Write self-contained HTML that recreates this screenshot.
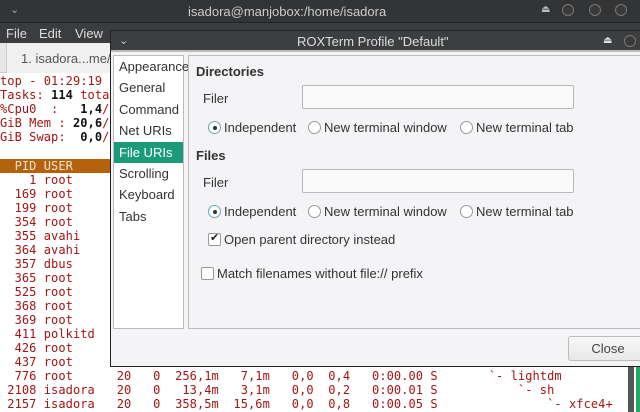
<!DOCTYPE html>
<html><head><style>
*{margin:0;padding:0;box-sizing:border-box}
body{width:640px;height:412px;overflow:hidden;position:relative;background:#fff;font-family:"Liberation Sans",sans-serif;font-size:13px;color:#333}
.abs{position:absolute}
#ttl{left:0;top:0;width:640px;height:23px;background:#333436;border-bottom:1px solid #222}
#menu{left:0;top:23px;width:640px;height:20px;background:#3b3c3e;color:#ddd;font-size:13px}
#tabs{left:0;top:43px;width:640px;height:30px;background:#e6e6e6;border-bottom:1px solid #ccc}
pre{position:absolute;left:0;font-family:"DejaVu Sans Mono",monospace;font-size:12px;letter-spacing:.07px;line-height:14px;color:#a31515}
b{color:#111}
.circ{position:absolute;width:12px;height:12px;border-radius:50%;border:1.5px solid #777;background:#3a3a3a}
#dlg{left:110px;top:30px;width:530px;height:337px;background:#f4f4f6;border:1px solid #222;border-right:none}
#dt{left:0;top:0;width:530px;height:21px;background:#3d3e40;color:#ddd;font-size:13px;border-bottom:2px solid #bbb}
#side{left:2px;top:24px;width:71px;height:274px;background:#fff;border:1px solid #bbb}
#side div{height:21.4px;line-height:21px;padding-left:5px;font-size:13px;color:#333}
#side .sel{background:#1b9b7c;color:#fff}
#pane{left:77px;top:24px;width:460px;height:274px;background:#f4f4f6;border:1px solid #bbb}
.h{position:absolute;font-weight:bold;font-size:13px;color:#333}
.l{position:absolute;font-size:13px;color:#333;white-space:nowrap}
.in{position:absolute;width:272px;height:24px;background:#fafafa;border:1px solid #b8b8b8;border-radius:2px}
.rb{position:absolute;width:13px;height:13px;border-radius:50%;border:1px solid #999;background:#fff}
.rb.on::after{content:"";position:absolute;left:3.5px;top:3.5px;width:4px;height:4px;border-radius:50%;background:#333}
.rb.on{border-color:#6ab}
.cb{position:absolute;width:13px;height:13px;border:1px solid #999;background:#fff;border-radius:2px}
</style></head><body>
<div id="ttl" class="abs">
 <div class="abs" style="left:10px;top:3px;color:#aaa;font-size:11px">⌄</div>
 <div class="abs" style="left:188px;top:4px;color:#ccc;font-size:13px">isadora@manjobox:/home/isadora</div>
 <div class="abs" style="left:541px;top:4px;color:#bbb;font-size:10px">⏏</div>
 <div class="circ" style="left:562px;top:4px"></div><div class="circ" style="left:589px;top:4px"></div><div class="circ" style="left:615px;top:4px"></div>
</div>
<div id="menu" class="abs"><span class="abs" style="left:6px;top:3px">File</span><span class="abs" style="left:39px;top:3px">Edit</span><span class="abs" style="left:75px;top:3px">View</span></div>
<div id="tabs" class="abs"><div class="abs" style="left:6px;top:0;width:105px;height:30px;background:#f0f0f0;border-left:1px solid #ccc"></div><span class="abs" style="left:21px;top:8px;color:#555">1. isadora...me/is</span></div>
<pre style="top:74px">top - 01:29:19
<span>Tasks: </span><b>114</b> tota
%Cpu0  :   <b>1,4</b>/
GiB Mem : <b>20,6</b>/
GiB Swap:  <b>0,0</b>/
</pre>
<div class="abs" style="left:0;top:159px;width:120px;height:14px;background:#b5620c"></div>
<pre style="top:159px;color:#f4e4d0">  PID USER</pre>
<pre style="top:173px">    1 root
  169 root
  199 root
  354 root
  355 avahi
  364 avahi
  357 dbus
  365 root
  525 root
  368 root
  369 root
  411 polkitd
  426 root
  437 root
  776 root      20   0  256,1m   7,1m   0,0  0,4   0:00.00 S       `- lightdm
 2108 isadora   20   0   13,4m   3,1m   0,0  0,2   0:00.01 S           `- sh
 2157 isadora   20   0  358,5m  15,6m   0,0  0,8   0:00.05 S               `- xfce4+</pre>
<div class="abs" style="left:628px;top:367px;width:6px;height:45px;background:#555"></div>
<div class="abs" style="left:636px;top:367px;width:4px;height:45px;background:#2a6"></div>
<div id="dlg" class="abs">
 <div id="dt" class="abs">
  <div class="abs" style="left:8px;top:3px;color:#ccc;font-size:11px">⌄</div>
  <div class="abs" style="left:186px;top:3px">ROXTerm Profile "Default"</div>
  <div class="abs" style="left:492px;top:4px;color:#ddd;font-size:10px">⏏</div>
  <div class="circ" style="left:513px;top:4px"></div>
 </div>
 <div id="side" class="abs">
  <div>Appearance</div><div>General</div><div>Command</div><div>Net URIs</div><div class="sel">File URIs</div><div>Scrolling</div><div>Keyboard</div><div>Tabs</div>
 </div>
 <div id="pane" class="abs">
  <div class="h" style="left:7px;top:8px">Directories</div>
  <div class="l" style="left:14px;top:35px">Filer</div>
  <div class="in" style="left:113px;top:29px"></div>
  <div class="rb on" style="left:19px;top:65px"></div><div class="l" style="left:35px;top:64px">Independent</div>
  <div class="rb" style="left:119px;top:65px"></div><div class="l" style="left:135px;top:64px">New terminal window</div>
  <div class="rb" style="left:271px;top:65px"></div><div class="l" style="left:287px;top:64px">New terminal tab</div>
  <div class="h" style="left:7px;top:92px">Files</div>
  <div class="l" style="left:14px;top:119px">Filer</div>
  <div class="in" style="left:113px;top:113px"></div>
  <div class="rb on" style="left:19px;top:149px"></div><div class="l" style="left:35px;top:148px">Independent</div>
  <div class="rb" style="left:119px;top:149px"></div><div class="l" style="left:135px;top:148px">New terminal window</div>
  <div class="rb" style="left:271px;top:149px"></div><div class="l" style="left:287px;top:148px">New terminal tab</div>
  <div class="cb" style="left:19px;top:177px"><span style="position:absolute;left:1px;top:-3px;font-size:11px;color:#222">✔</span></div><div class="l" style="left:35px;top:176px">Open parent directory instead</div>
  <div class="cb" style="left:12px;top:211px"></div><div class="l" style="left:28px;top:210px">Match filenames without file:// prefix</div>
 </div>
 <div class="abs" style="left:457px;top:305px;width:80px;height:25px;background:linear-gradient(#f8f8f8,#e8e8e8);border:1px solid #bbb;border-radius:3px;text-align:center;line-height:23px;color:#444">Close</div>
</div>
</body></html>
